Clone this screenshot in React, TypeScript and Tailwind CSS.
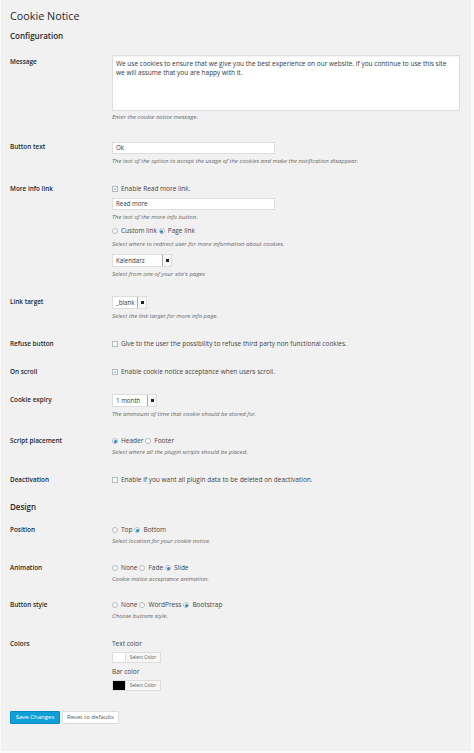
import React from "react";

const font = { fontFamily: '"Open Sans", "Liberation Sans", sans-serif' };

const Help = ({ children, className = "" }: { children: React.ReactNode; className?: string }) => (
  <p className={`text-[6px] leading-[7px] italic text-[#666] whitespace-nowrap ${className}`}>{children}</p>
);

const Check = ({ checked }: { checked?: boolean }) => (
  <span className="inline-flex w-[6px] h-[6px] mr-[3px] items-center justify-center border border-[#b4b9be] bg-white shrink-0">
    {checked && (
      <svg viewBox="0 0 10 10" className="w-[6px] h-[6px]">
        <path d="M2 5 L4 7.5 L8.5 2" fill="none" stroke="#1e8cbe" strokeWidth="1.6" />
      </svg>
    )}
  </span>
);

const Radio = ({ checked, label }: { checked?: boolean; label: string }) => (
  <span className="inline-flex items-center mr-[2px]">
    <span className="inline-flex w-[6px] h-[6px] mr-[3px] rounded-full border border-[#b4b9be] bg-white items-center justify-center">
      {checked && <span className="w-[3px] h-[3px] rounded-full bg-[#1e8cbe]" />}
    </span>
    {label}
  </span>
);

const Select = ({ value, width }: { value: string; width: string }) => (
  <div className={`flex h-[13px] bg-white border border-[#ddd] ${width}`}>
    <span className="flex-1 pl-[3px] text-[6.2px] leading-[11px] text-[#32373c]">{value}</span>
    <span className="w-[9px] h-full border-l border-[#aaa] bg-[#f7f7f7] flex items-center justify-center">
      <span className="w-[3px] h-[3px] bg-[#222]" />
    </span>
  </div>
);

const Row = ({
  label,
  mt,
  pt = "pt-0",
  children,
}: {
  label: string;
  mt: string;
  pt?: string;
  children: React.ReactNode;
}) => (
  <div className={`flex ${mt}`}>
    <div className={`w-[102px] shrink-0 text-[6.4px] leading-[8px] font-semibold text-[#23282d] ${pt}`}>{label}</div>
    <div className="flex-1 text-[6.5px] leading-[8px] text-[#444] whitespace-nowrap">{children}</div>
  </div>
);

const ColorPick = ({ swatch }: { swatch: string }) => (
  <div className="flex h-[11px] mt-[4px]">
    <span className={`w-[14px] h-full border border-[#ddd] ${swatch}`} />
    <span className="w-[35px] h-full border border-l-0 border-[#ddd] bg-[#f7f7f7] text-[4.8px] leading-[9px] text-[#555] text-center">
      Select Color
    </span>
  </div>
);

export default function App() {
  return (
    <div className="bg-[#fafafa] w-[474px] h-[753px] overflow-hidden" style={font}>
      <div className="ml-[1px] w-[470px] h-[751px] bg-[#f1f1f1] pl-[9px] pt-[9px]">
        <h1 className="text-[10.8px] leading-[14px] text-[#23282d]">Cookie Notice</h1>
        <h2 className="mt-[8px] text-[8px] leading-[10px] font-semibold text-[#23282d]">Configuration</h2>

        <Row label="Message" mt="mt-[14px]" pt="pt-[3px]">
          <div className="w-[348px] h-[56px] bg-white border border-[#ddd] shadow-[inset_0_1px_1px_rgba(0,0,0,0.05)] px-[3px] pt-[3px] text-[6.5px] leading-[9px] text-[#32373c] whitespace-normal">
            We use cookies to ensure that we give you the best experience on our website. If you continue to use this site
            we will assume that you are happy with it.
          </div>
          <Help className="mt-[3px]">Enter the cookie notice message.</Help>
        </Row>

        <Row label="Button text" mt="mt-[21px]" pt="pt-[1px]">
          <div className="w-[163px] h-[12px] bg-white border border-[#ddd] pl-[3px] text-[6.2px] leading-[10px] text-[#32373c]">Ok</div>
          <Help className="mt-[4px]">
            The text of the option to accept the usage of the cookies and make the notification disappear.
          </Help>
        </Row>

        <Row label="More info link" mt="mt-[20px]">
          <div className="flex items-center h-[8px]">
            <Check checked />
            Enable Read more link.
          </div>
          <div className="mt-[5px] w-[163px] h-[12px] bg-white border border-[#ddd] pl-[3px] text-[6.2px] leading-[10px] text-[#32373c]">
            Read more
          </div>
          <Help className="mt-[4px]">The text of the more info button.</Help>
          <div className="mt-[6px] flex items-center h-[8px]">
            <Radio label="Custom link" />
            <Radio checked label="Page link" />
          </div>
          <Help className="mt-[6px]">Select where to redirect user for more information about cookies.</Help>
          <div className="mt-[6px]">
            <Select value="Kalendarz" width="w-[60px]" />
          </div>
          <Help className="mt-[4px]">Select from one of your site's pages</Help>
        </Row>

        <Row label="Link target" mt="mt-[18px]" pt="pt-[2px]">
          <Select value="_blank" width="w-[35px]" />
          <Help className="mt-[4px]">Select the link target for more info page.</Help>
        </Row>

        <Row label="Refuse button" mt="mt-[20px]">
          <div className="flex items-center h-[8px]">
            <Check />
            Give to the user the possibility to refuse third party non functional cookies.
          </div>
        </Row>

        <Row label="On scroll" mt="mt-[20px]">
          <div className="flex items-center h-[8px]">
            <Check checked />
            Enable cookie notice acceptance when users scroll.
          </div>
        </Row>

        <Row label="Cookie expiry" mt="mt-[18px]" pt="pt-[2px]">
          <Select value="1 month" width="w-[45px]" />
          <Help className="mt-[4px]">The ammount of time that cookie should be stored for.</Help>
        </Row>

        <Row label="Script placement" mt="mt-[19px]">
          <div className="flex items-center h-[8px]">
            <Radio checked label="Header" />
            <Radio label="Footer" />
          </div>
          <Help className="mt-[4px]">Select where all the plugin scripts should be placed.</Help>
        </Row>

        <Row label="Deactivation" mt="mt-[20px]">
          <div className="flex items-center h-[8px]">
            <Check />
            Enable if you want all plugin data to be deleted on deactivation.
          </div>
        </Row>

        <h2 className="mt-[18px] text-[8px] leading-[10px] font-semibold text-[#23282d]">Design</h2>

        <Row label="Position" mt="mt-[14px]">
          <div className="flex items-center h-[8px]">
            <Radio label="Top" />
            <Radio checked label="Bottom" />
          </div>
          <Help className="mt-[4px]">Select location for your cookie notice.</Help>
        </Row>

        <Row label="Animation" mt="mt-[19px]">
          <div className="flex items-center h-[8px]">
            <Radio label="None" />
            <Radio label="Fade" />
            <Radio checked label="Slide" />
          </div>
          <Help className="mt-[4px]">Cookie notice acceptance animation.</Help>
        </Row>

        <Row label="Button style" mt="mt-[18px]">
          <div className="flex items-center h-[8px]">
            <Radio label="None" />
            <Radio label="WordPress" />
            <Radio checked label="Bootstrap" />
          </div>
          <Help className="mt-[4px]">Choose buttons style.</Help>
        </Row>

        <Row label="Colors" mt="mt-[20px]">
          <div>Text color</div>
          <ColorPick swatch="bg-white" />
          <div className="mt-[5px]">Bar color</div>
          <ColorPick swatch="bg-black" />
        </Row>

        <div className="mt-[20px] flex gap-[2px]">
          <button className="h-[13px] w-[50px] bg-[#0ea0d6] border border-[#0b8ac0] text-white text-[6px] leading-[11px] rounded-[1px]">
            Save Changes
          </button>
          <button className="h-[13px] w-[57px] bg-white border border-[#ddd] text-[#555] text-[6px] leading-[11px] rounded-[1px]">
            Reset to defaults
          </button>
        </div>
      </div>
    </div>
  );
}
